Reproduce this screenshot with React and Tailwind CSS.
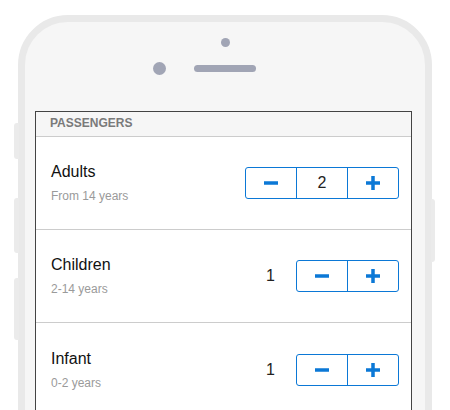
import React from "react";

const BLUE = "#0b78d6";

function Minus() {
  return (
    <svg width="14" height="14" viewBox="0 0 14 14">
      <rect x="0" y="5.25" width="14" height="3.5" fill={BLUE} />
    </svg>
  );
}

function Plus() {
  return (
    <svg width="14" height="14" viewBox="0 0 14 14">
      <rect x="0" y="5.25" width="14" height="3.5" fill={BLUE} />
      <rect x="5.25" y="0" width="3.5" height="14" fill={BLUE} />
    </svg>
  );
}

function Row({ title, sub, value, inside, last }) {
  return (
    <div
      className={
        "flex items-center justify-between h-[93px] pl-[15px] pr-[12px] bg-white " +
        (last ? "" : "border-b border-[#cccccc]")
      }
    >
      <div className="flex flex-col">
        <div className="text-[16px] leading-[20px] text-[#111111]">{title}</div>
        <div className="mt-[6px] text-[12px] leading-[16px] text-[#9a9a9a]">{sub}</div>
      </div>
      <div className="flex items-center">
        {!inside && (
          <div className="w-[51px] flex justify-center text-[16px] leading-[20px] text-[#222222]">
            {value}
          </div>
        )}
        <div className="flex h-[32px] border border-[#0b78d6] rounded-[3px]">
          <div className="w-[50px] flex items-center justify-center">
            <Minus />
          </div>
          {inside && (
            <div className="w-[51px] border-l border-[#0b78d6] flex items-center justify-center text-[16px] text-[#222222]">
              {value}
            </div>
          )}
          <div className="w-[51px] border-l border-[#0b78d6] flex items-center justify-center">
            <Plus />
          </div>
        </div>
      </div>
    </div>
  );
}

export default function App() {
  return (
    <div className="relative w-[450px] h-[410px] overflow-hidden bg-white font-['Liberation_Sans',Arial,sans-serif]">
      {/* side buttons */}
      <div className="absolute left-[14px] top-[123px] w-[5px] h-[36px] rounded-l-[3px] bg-[#ebebeb]" />
      <div className="absolute left-[14px] top-[198px] w-[5px] h-[55px] rounded-l-[3px] bg-[#ebebeb]" />
      <div className="absolute left-[14px] top-[278px] w-[5px] h-[62px] rounded-l-[3px] bg-[#ebebeb]" />
      <div className="absolute left-[431px] top-[199px] w-[4px] h-[63px] rounded-r-[3px] bg-[#ebebeb]" />

      <div className="pt-[15px] pl-[18px]">
        <div className="w-[414px] h-[470px] rounded-[50px] border-[7px] border-[#e9e9e9] bg-[#f6f6f6] flex flex-col">
          <div className="mt-[16px] self-center w-[9px] h-[9px] rounded-full bg-[#a1a5b5]" />
          <div className="mt-[15px] self-center flex items-center gap-[28px]">
            <div className="w-[13px] h-[13px] rounded-full bg-[#a1a5b5]" />
            <div className="w-[62px] h-[7px] rounded-full bg-[#a1a5b5]" />
            <div className="w-[13px] h-[13px]" />
          </div>
          <div className="mt-[36px] ml-[10px] w-[377px] flex-1 border border-[#444444] bg-white">
            <div className="h-[25px] pl-[14px] bg-[#f6f6f6] border-b border-[#cccccc] text-[12px] leading-[22px] font-bold text-[#7a7a7a] tracking-normal">
              PASSENGERS
            </div>
            <Row title="Adults" sub="From 14 years" value="2" inside />
            <Row title="Children" sub="2-14 years" value="1" />
            <Row title="Infant" sub="0-2 years" value="1" last />
          </div>
        </div>
      </div>
    </div>
  );
}
